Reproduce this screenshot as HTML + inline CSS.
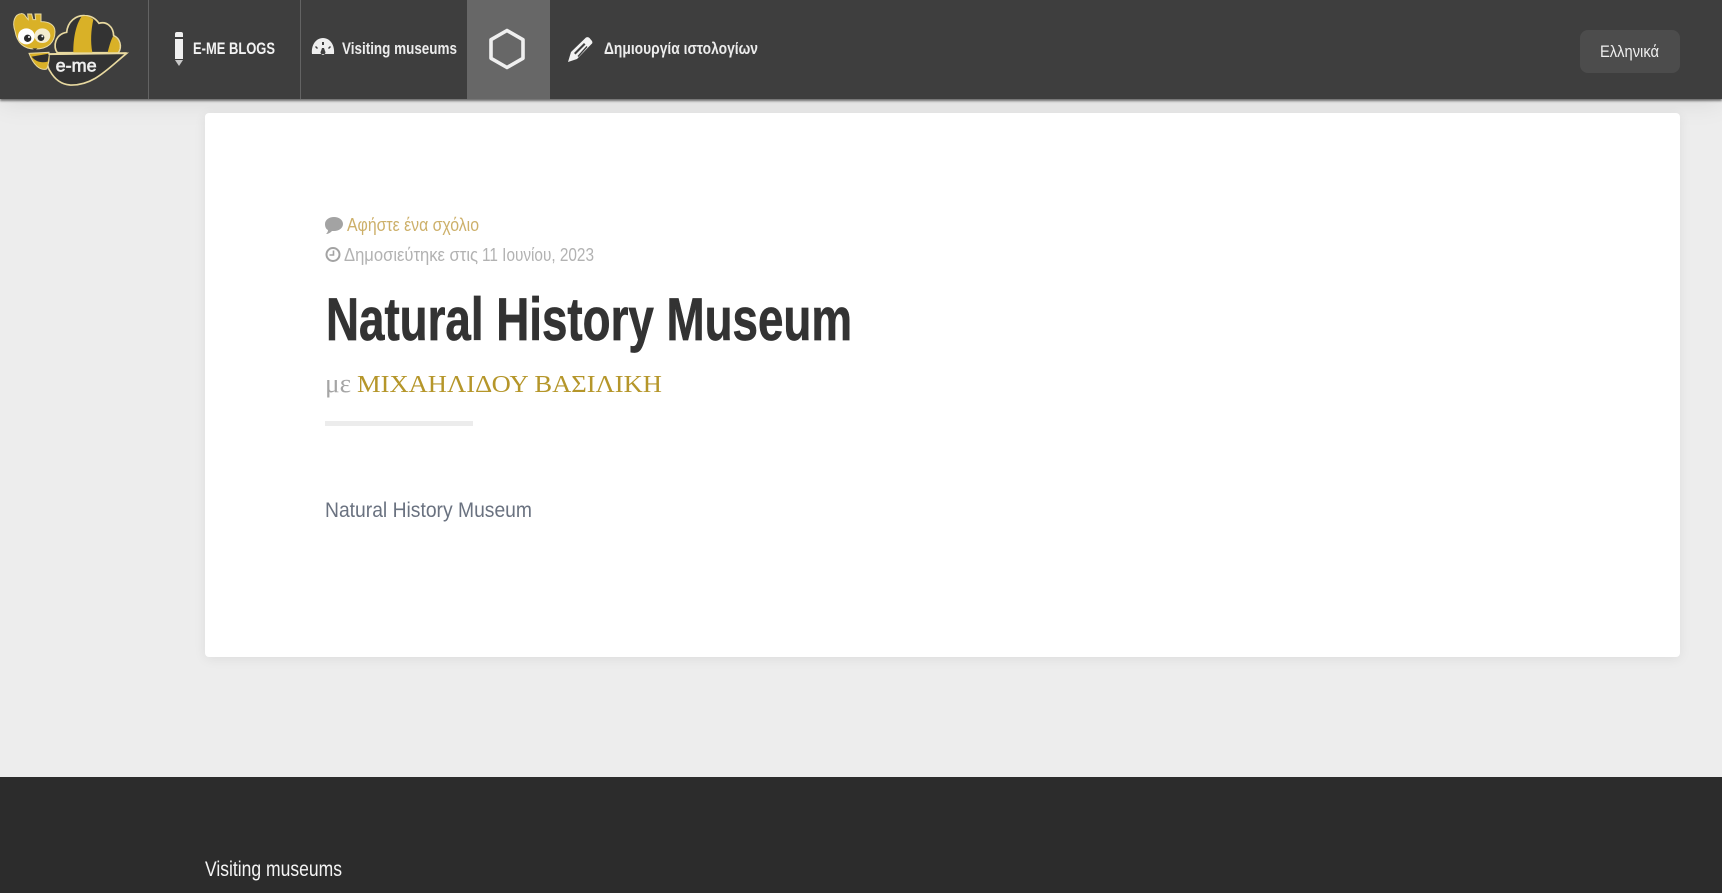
<!DOCTYPE html>
<html lang="el"><head><meta charset="utf-8"><title>Natural History Museum</title>
<style>
html,body{margin:0;padding:0;width:1722px;height:893px;overflow:hidden;background:#ededed}
header{position:absolute;left:0;top:0;width:1722px;height:99px;background:#3e3e3e;box-shadow:0 2px 2px rgba(0,0,0,.5),0 5px 24px rgba(0,0,0,.08)}
.sep{position:absolute;top:0;width:1px;height:99px;background:#636363}
.hex{position:absolute;left:467px;top:0;width:83px;height:99px;background:#676767}
.lang{position:absolute;left:1580px;top:30px;width:100px;height:43px;border-radius:8px;background:#4c4c4c}
.card{position:absolute;left:205px;top:113px;width:1475px;height:544px;background:#fff;border-radius:4px;box-shadow:0 2px 12px rgba(0,0,0,.07)}
.rule{position:absolute;left:325px;top:421px;width:148px;height:5px;background:#ececec}
footer{position:absolute;left:0;top:777px;width:1722px;height:116px;background:#2c2c2c}
svg{position:absolute;left:0;top:0}
text{font-family:"Liberation Sans",sans-serif}
.s{font-family:"Liberation Serif",serif}
</style></head><body>
<header><div class="sep" style="left:148px"></div><div class="sep" style="left:300px"></div><div class="hex"></div><div class="lang"></div></header>
<div class="card"></div><div class="rule"></div><footer></footer>
<svg width="1722" height="893" viewBox="0 0 1722 893" xmlns="http://www.w3.org/2000/svg">
<!-- logo -->
<g transform="translate(5 5) scale(.3333)">
<path d="M128 148C125 170 128 190 135 198C150 225 170 238 195 240C265 243 310 190 365 145Z" fill="#333" stroke="#e8d9a0" stroke-width="5"/>
<path d="M72 145C85 180 105 198 125 192C132 175 134 160 132 142Z" fill="#d9b127" stroke="#e8d9a0" stroke-width="3"/>
<path d="M80 155L132 146L128 170C108 175 92 170 80 155Z" fill="#2f2f2f"/>
<path d="M157 143C143 125 150 88 185 82C188 50 212 30 240 32C262 32 275 45 282 55C305 48 325 65 326 92C345 100 352 125 340 143Z" fill="#333" stroke="#e8d9a0" stroke-width="5"/>
<path d="M205 142C205 100 212 60 230 34C243 31 256 35 265 44C258 75 256 110 262 142Z" fill="#d9b127"/>
<path d="M308 142C312 125 318 105 324 94C343 100 350 125 338 142Z" fill="#d9b127"/>
<path d="M130 147L365 144" stroke="#e8d9a0" stroke-width="5" fill="none"/>
<path d="M30 78C20 50 30 28 48 26C60 24 62 38 70 44L68 27L80 27L84 44L92 44L90 27L108 27L108 50C130 50 150 58 150 80C150 112 130 132 90 132C55 132 36 112 30 78Z" fill="#d9b127" stroke="#e8d9a0" stroke-width="3"/>
<ellipse cx="64" cy="94" rx="25" ry="24" fill="#fff"/><ellipse cx="112" cy="92" rx="24" ry="22" fill="#f4ecd0"/>
<circle cx="68" cy="100" r="11" fill="#2c2c2c"/><circle cx="108" cy="98" r="10" fill="#2c2c2c"/>
<circle cx="72" cy="96" r="3" fill="#fff"/><circle cx="112" cy="94" r="3" fill="#fff"/>
<path d="M82 130Q90 138 97 130Z" fill="#333"/>
<text x="152" y="200" font-size="54" fill="#eee" stroke="#eee" stroke-width="2" textLength="123" lengthAdjust="spacingAndGlyphs">e-me</text>
</g>
<!-- nav icons -->
<g fill="#f0f0f0"><path d="M175 34q0-2 2-2h4q2 0 2 2v3h-8z"/><rect x="175" y="39" width="8" height="20"/><path d="M175 60h8l-4 6z" fill="#c8c8c8"/></g>
<path fill-rule="evenodd" fill="#eee" d="M312 54C311 45 316 38 323 38C330 38 335 45 334 54Z M322 42v3h2v-3z M315 47l2 2 1-1-2-2z M330 46l-2 2 1 1 2-2z M322 48l-1 3a2.4 2.4 0 1 0 4 0l-1-3z"/>
<path d="M507 30.500L523 39.700V58.300L507 67.500L491 58.300V39.700Z" fill="none" stroke="#efefef" stroke-width="3.600" stroke-linejoin="round"/>
<path fill-rule="evenodd" fill="#f2f2f2" d="M568 62L571 52L586 37.500Q588 36.500 589.500 38L592 41Q593 43 591.500 44L577 59Z M574 53l1.500 1.500 10-10-1.500-1.500z M577.500 56l1 1 9-10-1-1z"/>
<!-- nav text -->
<text x="193" y="54" font-size="17" font-weight="700" fill="#f2f2f2" textLength="82" lengthAdjust="spacingAndGlyphs">E-ME BLOGS</text>
<text x="342" y="54" font-size="17" font-weight="700" fill="#ececec" textLength="115" lengthAdjust="spacingAndGlyphs">Visiting museums</text>
<text x="604" y="54" font-size="17" font-weight="700" fill="#ececec" textLength="154" lengthAdjust="spacingAndGlyphs">Δημιουργία ιστολογίων</text>
<text x="1600" y="57" font-size="17" fill="#f0f0f0" textLength="59" lengthAdjust="spacingAndGlyphs">Ελληνικά</text>
<!-- meta -->
<path fill="#a3a3a3" d="M334 217c5 0 9 3 9 7s-4 7-9 7h-2c-2 2-4 3-6 3 1-1 2-2 2-4-2-1-3-3-3-6 0-4 4-7 9-7z"/>
<circle cx="333" cy="254.500" r="6.500" fill="none" stroke="#a3a3a3" stroke-width="2"/>
<path d="M333.500 250.500v4.500h-4" fill="none" stroke="#a3a3a3" stroke-width="1.600"/>
<text x="347" y="231" font-size="18" fill="#cdb06a" textLength="132" lengthAdjust="spacingAndGlyphs">Αφήστε ένα σχόλιο</text>
<text x="344" y="261" font-size="18" fill="#b2b2b2" textLength="134" lengthAdjust="spacingAndGlyphs">Δημοσιεύτηκε στις</text>
<text x="482" y="261" font-size="18" fill="#b2b2b2" textLength="112" lengthAdjust="spacingAndGlyphs">11 Ιουνίου, 2023</text>
<!-- title -->
<text x="326" y="340" font-size="60" font-weight="700" fill="#333" stroke="#333" stroke-width=".7" textLength="526" lengthAdjust="spacingAndGlyphs">Natural History Museum</text>
<text class="s" x="325" y="392" font-size="26" fill="#a5a5a5" textLength="26" lengthAdjust="spacingAndGlyphs">με</text>
<text class="s" x="357" y="392" font-size="24" fill="#b5962a" textLength="305" lengthAdjust="spacingAndGlyphs">ΜΙΧΑΗΛΙΔΟΥ ΒΑΣΙΛΙΚΗ</text>
<text x="325" y="517" font-size="21" fill="#6a7280" textLength="207" lengthAdjust="spacingAndGlyphs">Natural History Museum</text>
<text x="205" y="876" font-size="21" fill="#f4f4f4" textLength="137" lengthAdjust="spacingAndGlyphs">Visiting museums</text>
</svg>
</body></html>
